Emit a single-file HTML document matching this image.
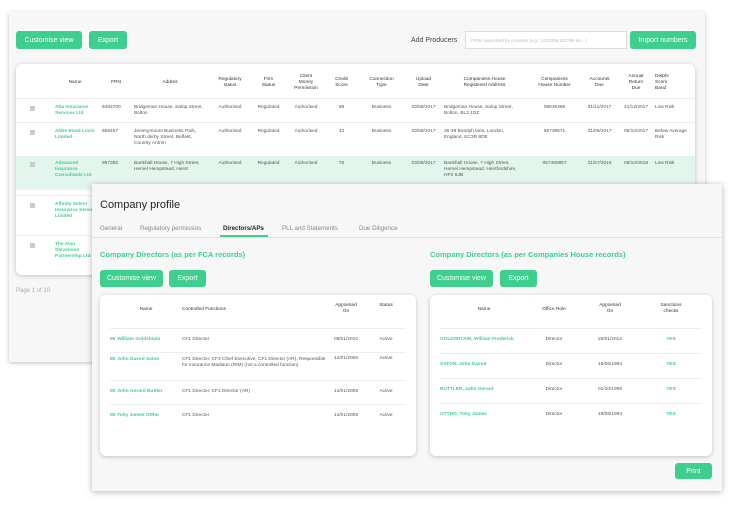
<!DOCTYPE html>
<html><head><meta charset="utf-8"><style>
*{box-sizing:border-box;margin:0;padding:0}
body{width:734px;height:506px;background:#fff;font-family:"Liberation Sans",Arial,sans-serif;position:relative;overflow:hidden;color:#333}
.abs{position:absolute}
.btn{position:absolute;background:#3ecf8e;color:#fff;border-radius:3px;font-size:7px;display:flex;align-items:center;justify-content:center}
.panel{position:absolute;background:#f7f7f7;box-shadow:0 1px 4px rgba(0,0,0,.25)}
.card{position:absolute;background:#fff;border-radius:6px;box-shadow:0 1px 4px rgba(0,0,0,.22)}
table{border-collapse:collapse;table-layout:fixed;position:absolute}
td,th{font-size:4.8px;line-height:6px;vertical-align:top;font-weight:normal;color:#555}
th{color:#333;text-align:center;vertical-align:middle}
.g{color:#3ecf8e;font-weight:bold}
.c{text-align:center}
.n{padding-left:7px!important;padding-right:3px}
.cb{display:inline-block;width:5px;height:5px;background:#ccc}
</style></head><body>

<div class="panel" style="left:9px;top:12px;width:696px;height:350px"></div>
<div class="btn" style="left:16px;top:31px;width:66px;height:18px">Customise view</div>
<div class="btn" style="left:89px;top:31px;width:38px;height:18px">Export</div>
<div class="abs" style="left:411px;top:37px;font-size:7px;color:#444">Add Producers</div>
<div class="abs" style="left:465px;top:31px;width:162px;height:18px;background:#fff;border:1px solid #ddd;font-size:4.5px;color:#bbb;padding:6px 5px">FRNs separated by commas (e.g.: 1223356,833789 etc...)</div>
<div class="btn" style="left:630px;top:31px;width:66px;height:18px">Import numbers</div>

<div class="card" style="left:16px;top:64px;width:679px;height:211px;overflow:hidden">
<div class="abs" style="left:0;top:92px;width:679px;height:34px;background:#e3f6ed"></div>
<table style="left:0;top:4px;width:679px">
<colgroup><col style="width:32px"><col style="width:54px"><col style="width:28px"><col style="width:80px"><col style="width:40px"><col style="width:37px"><col style="width:38px"><col style="width:33px"><col style="width:47px"><col style="width:37px"><col style="width:85px"><col style="width:55px"><col style="width:35px"><col style="width:38px"><col style="width:40px"></colgroup>
<tr style="height:30px"><th></th><th>Name</th><th>FRN</th><th>Addres</th><th>Regulatory<br>status</th><th>Firm<br>Status</th><th>Client<br>Money<br>Permission</th><th>Credit<br>Score</th><th>Connection<br>Type</th><th>Upload<br>Date</th><th>Companiess House<br>Registered Address</th><th>Companiess<br>House Number</th><th>Accounts<br>Due</th><th>Annual<br>Return<br>Due</th><th style="text-align:left">Delphi<br>Score<br>Band</th></tr>
<tr style="height:24px;border-top:1px solid #eee"><td class="c" style="padding-top:7px"><span class="cb"></span></td><td class="g n" style="padding-top:6px">Aba Insurance Services Ltd</td><td style="padding-top:6px">6492700</td><td style="padding:6px 6px 0 4px">Bridgeman House, Salop Street, Bolton</td><td class="c" style="padding-top:6px">Authorised</td><td class="c" style="padding-top:6px">Regulated</td><td class="c" style="padding-top:6px">Authorised</td><td class="c" style="padding-top:6px">88</td><td class="c" style="padding-top:6px">Business</td><td class="c" style="padding-top:6px">03/08/2017</td><td style="padding:6px 6px 0 2px">Bridgeman House, Salop Street, Bolton, BL2 1DZ</td><td class="c" style="padding-top:6px">05636386</td><td class="c" style="padding-top:6px">31/11/2017</td><td class="c" style="padding-top:6px">21/12/2017</td><td style="padding-top:6px">Low Risk</td></tr>
<tr style="height:33px;border-top:1px solid #eee"><td class="c" style="padding-top:7px"><span class="cb"></span></td><td class="g n" style="padding-top:6px">Abbe Bond Lovis Limited</td><td style="padding-top:6px">659467</td><td style="padding:6px 6px 0 4px">Jemmymount Business Park, North derby Street, Belfast, Country Antrim</td><td class="c" style="padding-top:6px">Authorised</td><td class="c" style="padding-top:6px">Regulated</td><td class="c" style="padding-top:6px">Authorised</td><td class="c" style="padding-top:6px">43</td><td class="c" style="padding-top:6px">Business</td><td class="c" style="padding-top:6px">03/08/2017</td><td style="padding:6px 6px 0 2px">36-38 Botolph lane, London, England, EC3R 8DE</td><td class="c" style="padding-top:6px">85739671</td><td class="c" style="padding-top:6px">31/09/2017</td><td class="c" style="padding-top:6px">05/10/2017</td><td style="padding:6px 8px 0 0">Below Average Risk</td></tr>
<tr style="height:40px"><td class="c" style="padding-top:7px"><span class="cb"></span></td><td class="g n" style="padding-top:6px">Advanced Insurance Consultants Ltd</td><td style="padding-top:6px">967365</td><td style="padding:6px 6px 0 4px">Bankhall House, 7 High Street, Hemel Hempstead, Herst</td><td class="c" style="padding-top:6px">Authorised</td><td class="c" style="padding-top:6px">Regulated</td><td class="c" style="padding-top:6px">Authorised</td><td class="c" style="padding-top:6px">76</td><td class="c" style="padding-top:6px">Business</td><td class="c" style="padding-top:6px">03/08/2017</td><td style="padding:6px 6px 0 2px">Bankhall House, 7 High Street, Hemel Hempstead, Hentfordshire, HP2 6JB</td><td class="c" style="padding-top:6px">057490857</td><td class="c" style="padding-top:6px">31/07/2018</td><td class="c" style="padding-top:6px">09/10/2018</td><td style="padding-top:6px">Low Risk</td></tr>
<tr style="height:40px;border-top:1px solid #eee"><td class="c" style="padding-top:7px"><span class="cb"></span></td><td class="g n" style="padding-top:6px">Affinity Select Insurance Services Limited</td><td colspan="13"></td></tr>
<tr style="height:40px;border-top:1px solid #eee"><td class="c" style="padding-top:7px"><span class="cb"></span></td><td class="g n" style="padding-top:6px">The Alan Stevenson Partnership Ltd</td><td colspan="13"></td></tr>
</table>
</div>
<div class="abs" style="left:16px;top:288px;font-size:6px;color:#aaa">Page 1 of 10</div>

<div class="panel" style="left:92px;top:184px;width:630px;height:307px;box-shadow:0 1px 6px rgba(0,0,0,.3)"></div>
<div class="abs" style="left:100px;top:199px;font-size:11px;color:#222">Company profile</div>
<div class="abs" style="left:92px;top:237px;width:630px;height:1px;background:#e2e2e2"></div>
<div class="abs" style="left:100px;top:225px;font-size:6.2px;color:#888">General</div>
<div class="abs" style="left:140px;top:225px;font-size:6.2px;color:#888">Regulatory permissios</div>
<div class="abs" style="left:223px;top:225px;font-size:6.2px;color:#222;font-weight:bold">Directors/APs</div>
<div class="abs" style="left:220px;top:235px;width:48px;height:2px;background:#3ecf8e"></div>
<div class="abs" style="left:282px;top:225px;font-size:6.2px;color:#888">PLL and Statements</div>
<div class="abs" style="left:359px;top:225px;font-size:6.2px;color:#888">Due Diligence</div>

<div class="abs g" style="left:100px;top:250px;font-size:7.5px">Company Directors (as per FCA records)</div>
<div class="btn" style="left:100px;top:270px;width:63px;height:17px">Customise view</div>
<div class="btn" style="left:169px;top:270px;width:37px;height:17px">Export</div>
<div class="card" style="left:100px;top:295px;width:316px;height:161px">
<table style="left:10px;top:8px;width:296px">
<colgroup><col style="width:72px"><col style="width:144px"><col style="width:40px"><col style="width:40px"></colgroup>
<tr style="height:25px"><th style="vertical-align:top;padding-top:4px">Name</th><th style="text-align:left;vertical-align:top;padding-top:4px">Controlled Functions</th><th style="vertical-align:top">Appointed<br>On</th><th style="vertical-align:top">Status</th></tr>
<tr style="height:24px;border-top:1px solid #eee"><td class="g" style="padding-top:8px">Mr William Goldshtain</td><td style="padding-top:8px">CF1 Director</td><td class="c" style="padding-top:8px">06/01/2010</td><td class="c" style="padding-top:8px">Active</td></tr>
<tr style="height:28px;border-top:1px solid #eee"><td class="g" style="padding-top:4px">Mr John Davod Saton</td><td style="padding-top:4px">CF1 Director, CF3 Chief Executive, CF1 Director (AR), Responsible for Insurance Madiaon (RIM) (not a controlled function)</td><td class="c" style="padding-top:3px">14/01/2005</td><td class="c" style="padding-top:3px">Active</td></tr>
<tr style="height:24px;border-top:1px solid #eee"><td class="g" style="padding-top:8px">Mr John Gerard Buttler</td><td style="padding-top:8px">CF1 Director, CF1 Director (AR)</td><td class="c" style="padding-top:8px">14/01/2005</td><td class="c" style="padding-top:8px">Active</td></tr>
<tr style="height:24px;border-top:1px solid #eee"><td class="g" style="padding-top:8px">Mr Toby James Ottho</td><td style="padding-top:8px">CF1 Director</td><td class="c" style="padding-top:8px">14/01/2005</td><td class="c" style="padding-top:8px">Active</td></tr>
</table>
</div>

<div class="abs g" style="left:430px;top:250px;font-size:7.5px">Company Directors (as per Companies House records)</div>
<div class="btn" style="left:430px;top:270px;width:63px;height:17px">Customise view</div>
<div class="btn" style="left:500px;top:270px;width:37px;height:17px">Export</div>
<div class="card" style="left:430px;top:295px;width:282px;height:161px">
<table style="left:10px;top:8px;width:262px">
<colgroup><col style="width:88px"><col style="width:52px"><col style="width:60px"><col style="width:62px"></colgroup>
<tr style="height:25px"><th style="vertical-align:top;padding-top:4px">Name</th><th style="vertical-align:top;padding-top:4px">Office Role</th><th style="vertical-align:top">Appointed<br>On</th><th style="vertical-align:top">Sanctions<br>checks</th></tr>
<tr style="height:25px;border-top:1px solid #eee"><td class="g" style="padding-top:8px;white-space:nowrap">GOLDSHTAIN, William Frederick</td><td class="c" style="padding-top:8px">Director</td><td class="c" style="padding-top:8px">25/01/2012</td><td class="c g" style="padding-top:8px">YES</td></tr>
<tr style="height:25px;border-top:1px solid #eee"><td class="g" style="padding-top:8px">SATON, John Davod</td><td class="c" style="padding-top:8px">Director</td><td class="c" style="padding-top:8px">15/06/1994</td><td class="c g" style="padding-top:8px">YES</td></tr>
<tr style="height:25px;border-top:1px solid #eee"><td class="g" style="padding-top:8px">BUTTLER, John Gerard</td><td class="c" style="padding-top:8px">Director</td><td class="c" style="padding-top:8px">01/10/1998</td><td class="c g" style="padding-top:8px">YES</td></tr>
<tr style="height:25px;border-top:1px solid #eee"><td class="g" style="padding-top:8px">OTTHO, Toby James</td><td class="c" style="padding-top:8px">Director</td><td class="c" style="padding-top:8px">16/08/1994</td><td class="c g" style="padding-top:8px">YES</td></tr>
</table>
</div>
<div class="btn" style="left:675px;top:463px;width:37px;height:16px">Print</div>
</body></html>
